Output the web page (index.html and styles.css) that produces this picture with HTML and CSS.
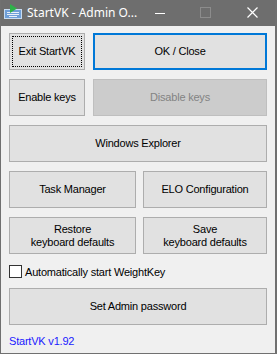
FILE: index.html
```html
<!DOCTYPE html>
<html lang="en">
<head>
    <meta charset="UTF-8">
    <title>StartVK - Admin Options</title>
    <link rel="stylesheet" href="styles.css">
</head>
<body>
    <div class="window">
        <div class="titlebar">
            <svg class="app-icon" width="18" height="16" viewBox="0 0 18 16">
                <rect x="0.5" y="5.5" width="17" height="9" fill="#6f9fd8" stroke="#c7dcf2"/>
                <rect x="3" y="8" width="12" height="1" fill="#e8f0fa"/>
                <rect x="3" y="10" width="12" height="1" fill="#e8f0fa"/>
                <rect x="5" y="12" width="8" height="1" fill="#e8f0fa"/>
                <polygon points="6,0 13,4.5 6,9" fill="#2fb34a"/>
            </svg>
            <span class="title">StartVK - Admin O...</span>
            <div class="caption-buttons">
                <span class="cap cap-min"></span>
                <span class="cap cap-max"></span>
                <svg class="cap-close" width="11" height="11" viewBox="0 0 11 11">
                    <path d="M0.5 0.5 L10.5 10.5 M10.5 0.5 L0.5 10.5" stroke="#fff" stroke-width="1.2"/>
                </svg>
            </div>
        </div>
        <div class="content">
            <div class="row row-narrow">
                <button class="btn focused"><span>Exit StartVK</span></button>
                <button class="btn default">OK / Close</button>
            </div>
            <div class="row row-narrow">
                <button class="btn">Enable keys</button>
                <button class="btn" disabled>Disable keys</button>
            </div>
            <div class="row">
                <button class="btn">Windows Explorer</button>
            </div>
            <div class="row row-half">
                <button class="btn">Task Manager</button>
                <button class="btn">ELO Configuration</button>
            </div>
            <div class="row row-half">
                <button class="btn">Restore<br>keyboard defaults</button>
                <button class="btn">Save<br>keyboard defaults</button>
            </div>
            <label class="check">
                <span class="box"></span>
                Automatically start WeightKey
            </label>
            <div class="row">
                <button class="btn">Set Admin password</button>
            </div>
            <div class="version">StartVK v1.92</div>
        </div>
    </div>
</body>
</html>
```

FILE: styles.css
```css
html, body {
    margin: 0;
    padding: 0;
}
body {
    width: 277px;
    height: 354px;
    overflow: hidden;
    font-family: "Liberation Sans", Arial, sans-serif;
    font-size: 11px;
    letter-spacing: -0.2px;
}
.window {
    width: 274px;
    height: 353px;
    border-left: 1px solid #707070;
    border-right: 2px solid #707070;
    border-bottom: 1px solid #707070;
    background: #f0f0f0;
    display: flex;
    flex-direction: column;
}
.titlebar {
    height: 26px;
    background: #6e6e6e;
    display: flex;
    align-items: center;
    color: #fff;
    flex-shrink: 0;
    letter-spacing: 0;
}
.app-icon {
    margin-left: 3px;
    margin-right: 5px;
    margin-top: -2px;
}
.title {
    font-family: "Noto Sans", "Open Sans", sans-serif;
    font-size: 12px;
    margin-top: -1px;
}
.caption-buttons {
    margin-left: auto;
    display: flex;
    align-items: center;
}
.cap {
    display: block;
}
.cap-min {
    width: 10px;
    height: 1px;
    background: #fff;
    margin-right: 35px;
}
.cap-max {
    width: 9px;
    height: 9px;
    border: 1px solid #8c8c8c;
    margin-right: 36px;
    margin-top: -1px;
}
.cap-close {
    margin-right: 17px;
    margin-top: -1px;
}
.content {
    padding: 7px 8px 0 8px;
    display: flex;
    flex-direction: column;
}
.row {
    display: flex;
    gap: 8px;
    margin-bottom: 9px;
}
.row-half {
    gap: 7px;
}
.btn {
    flex: 1;
    height: 37px;
    margin: 0;
    padding: 0;
    background: #e1e1e1;
    border: 1px solid #adadad;
    font-family: "Liberation Sans", Arial, sans-serif;
    font-size: 11px;
    letter-spacing: -0.2px;
    color: #000;
    line-height: 13px;
}
.row-narrow .btn:first-child {
    flex: 0 0 76px;
}
.row-half .btn:first-child {
    flex: 0 0 127px;
}
.btn.default {
    border: 2px solid #0078d7;
}
.btn.focused {
    position: relative;
}
.btn.focused span::after {
    content: "";
    position: absolute;
    left: 2px;
    top: 2px;
    right: 2px;
    bottom: 2px;
    border: 1px dotted #000;
}
.btn:disabled {
    background: #cccccc;
    border-color: #bfbfbf;
    color: #838383;
}
.check {
    display: flex;
    align-items: center;
    gap: 3px;
    margin: 2px 0 10px 0;
    height: 13px;
}
.box {
    width: 11px;
    height: 11px;
    border: 1px solid #333;
    background: #fff;
}
.version {
    color: #1a1aff;
    margin-top: 1px;
    line-height: 13px;
}
```
